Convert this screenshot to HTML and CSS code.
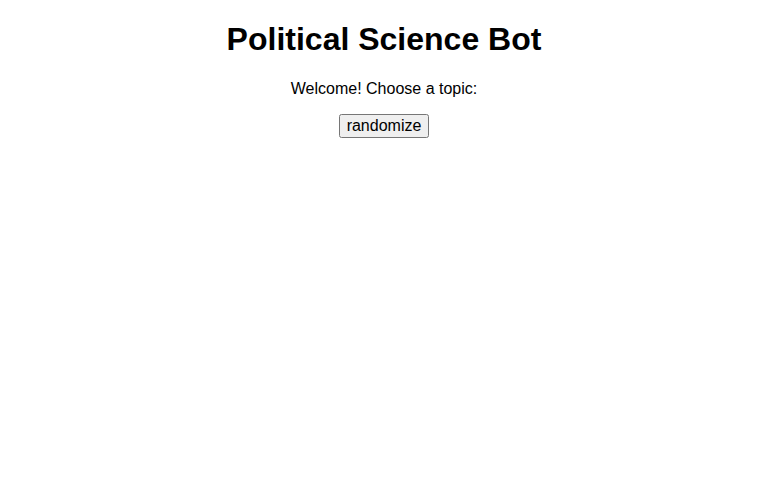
FILE: index.html
```html
<!DOCTYPE html>
<html lang="en">
<head>
<meta charset="utf-8">
<title>Political Science Bot</title>
<link rel="stylesheet" href="styles.css">
</head>
<body>
<main class="app">
  <h1 class="app-title">Political Science Bot</h1>
  <p class="app-intro">Welcome! Choose a topic:</p>
  <button class="randomize-btn" type="button">randomize</button>
</main>
</body>
</html>
```

FILE: styles.css
```css
body {
  margin: 0;
  font-family: "Liberation Sans", Arial, sans-serif;
  color: #000;
  background: #fff;
}

.app {
  text-align: center;
  padding: 0 8px;
}

.app-title {
  font-size: 32px;
  font-weight: bold;
  margin: 21px 0 22px;
}

.app-intro {
  font-size: 16px;
}

.randomize-btn {
  font-family: inherit;
  font-size: 16px;
}
```
